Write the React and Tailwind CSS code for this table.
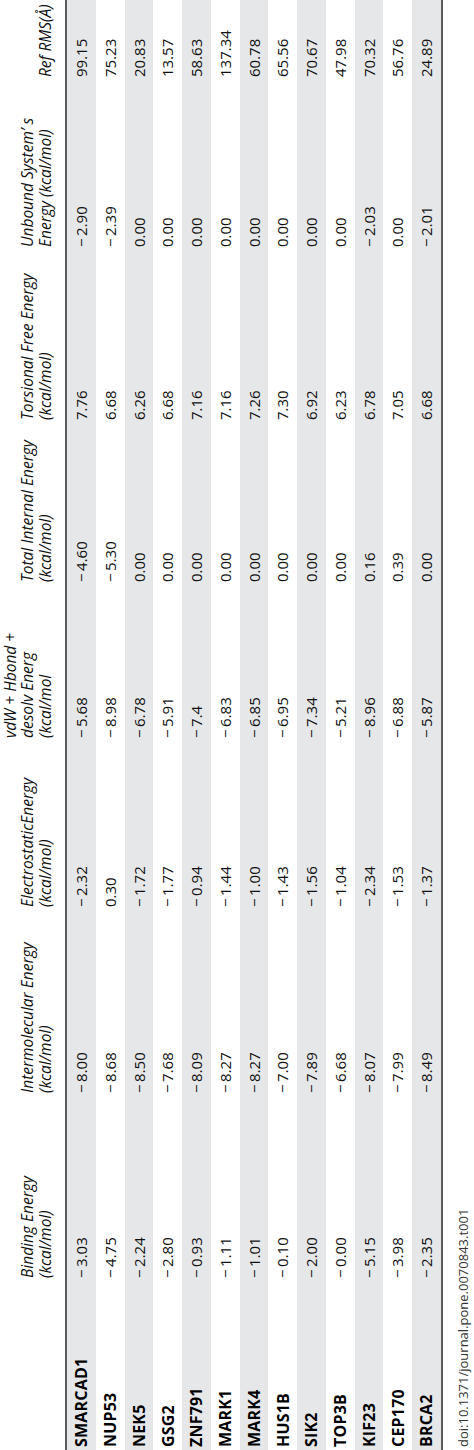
import React from "react";

const headers = [
  [],
  ["Binding Energy", "(kcal/mol)"],
  ["Intermolecular Energy", "(kcal/mol)"],
  ["ElectrostaticEnergy", "(kcal/mol)"],
  ["vdW + Hbond +", "desolv Energ", "(kcal/mol"],
  ["Total Internal Energy", "(kcal/mol)"],
  ["Torsional Free Energy", "(kcal/mol)"],
  ["Unbound System\u2019 s", "Energy (kcal/mol)"],
  ["Ref RMS(\u00c5)"],
];

const rows = [
  ["SMARCAD1", "−3.03", "−8.00", "−2.32", "−5.68", "−4.60", "7.76", "−2.90", "99.15"],
  ["NUP53", "−4.75", "−8.68", "0.30", "−8.98", "−5.30", "6.68", "−2.39", "75.23"],
  ["NEK5", "−2.24", "−8.50", "−1.72", "−6.78", "0.00", "6.26", "0.00", "20.83"],
  ["GSG2", "−2.80", "−7.68", "−1.77", "−5.91", "0.00", "6.68", "0.00", "13.57"],
  ["ZNF791", "−0.93", "−8.09", "−0.94", "−7.4", "0.00", "7.16", "0.00", "58.63"],
  ["MARK1", "−1.11", "−8.27", "−1.44", "−6.83", "0.00", "7.16", "0.00", "137.34"],
  ["MARK4", "−1.01", "−8.27", "−1.00", "−6.85", "0.00", "7.26", "0.00", "60.78"],
  ["HUS1B", "−0.10", "−7.00", "−1.43", "−6.95", "0.00", "7.30", "0.00", "65.56"],
  ["SIK2", "−2.00", "−7.89", "−1.56", "−7.34", "0.00", "6.92", "0.00", "70.67"],
  ["TOP3B", "−0.00", "−6.68", "−1.04", "−5.21", "0.00", "6.23", "0.00", "47.98"],
  ["KIF23", "−5.15", "−8.07", "−2.34", "−8.96", "0.16", "6.78", "−2.03", "70.32"],
  ["CEP170", "−3.98", "−7.99", "−1.53", "−6.88", "0.39", "7.05", "0.00", "56.76"],
  ["BRCA2", "−2.35", "−8.49", "−1.37", "−5.87", "0.00", "6.68", "−2.01", "24.89"],
];

const grid =
  "grid grid-cols-[169px_185px_186px_169px_156px_162px_173px_170px_1fr] pl-[3px]";

function fmt(v) {
  if (v.startsWith("−")) return "−\u2009" + v.slice(1);
  return v;
}

export default function App() {
  return (
    <div
      className="relative w-[474px] h-[1450px] overflow-hidden bg-white text-[#111]"
      style={{ fontFamily: '"Open Sans", "Liberation Sans", sans-serif' }}
    >
      <div className="w-[1450px] h-[474px] origin-top-left [transform:translateY(1450px)_rotate(-90deg)] flex flex-col">
        {/* header */}
        <div className={`${grid} h-[65px] items-end pb-[11px] whitespace-nowrap`}>
          {headers.map((h, i) => (
            <div key={i} className="flex flex-col italic text-[15.5px] leading-[17.5px]">
              {h.map((l, j) => (
                <span key={j}>{l}</span>
              ))}
            </div>
          ))}
        </div>
        <div className="h-[2px] bg-[#5a5b5d]" />
        {/* rows */}
        <div className="flex flex-col">
          {rows.map((r, i) => (
            <div
              key={r[0]}
              className={`${grid} h-[28.75px] items-center whitespace-nowrap ${
                i % 2 === 0 ? "bg-[#e6e7e8]" : "bg-white"
              }`}
            >
              <span className="font-bold text-[16px] text-black tracking-[0.2px]">{r[0]}</span>
              {r.slice(1).map((v, j) => (
                <span key={j} className="text-[15px]">
                  {fmt(v)}
                </span>
              ))}
            </div>
          ))}
        </div>
        <div className="h-[2px] bg-[#5a5b5d]" />
        <div className="pl-[3px] pt-[11px] text-[13px] leading-[18px] text-[#333]">
          doi:10.1371/journal.pone.0070843.t001
        </div>
      </div>
    </div>
  );
}
